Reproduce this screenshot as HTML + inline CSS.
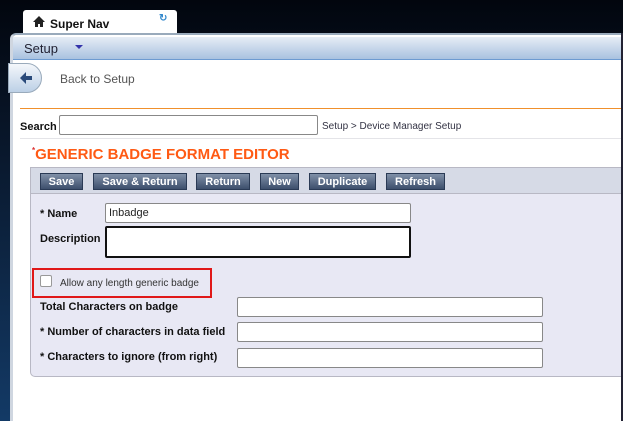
<!DOCTYPE html>
<html><head><style>
body{margin:0;width:623px;height:421px;overflow:hidden;background:linear-gradient(180deg,#02060e 0%,#0a1a30 40%,#133a66 100%);font-family:"Liberation Sans",sans-serif;position:relative}
div,span{position:absolute;box-sizing:border-box}
.tab{left:23px;top:10px;width:154px;height:28px;background:#fff;border-radius:3px 3px 0 0;font-size:12px;font-weight:bold;color:#111}
.win{left:10px;top:33px;width:613px;height:388px;background:#fff;border-radius:6px 0 0 0;border-top:2px solid #9ab;border-left:3px solid #cfd6e0}
.setup{left:13px;top:37px;width:610px;height:23px;background:linear-gradient(#e6edf6,#a9c2e0);border-bottom:1px solid #6d9bd1;font-size:13px;color:#223}
.btn{top:173px;height:17px;background:linear-gradient(#8090a8,#3d4f6c);color:#fff;font-size:11px;font-weight:bold;text-align:center;line-height:16px;border:1px solid #2a3a55}
.lbl{font-size:11px;font-weight:bold;color:#111}
.inp{background:#fff;border:1px solid #888;border-radius:2px}
</style></head><body>
<div class="tab"><svg style="position:absolute;left:10px;top:6px" width="12" height="11" viewBox="0 0 12 11"><path d="M6 0L0 6h2v5h3V8h2v3h3V6h2z" fill="#222"/></svg><span style="left:27px;top:7px">Super Nav</span><span style="left:136px;top:3px;color:#38c;font-size:10px">↻</span></div>
<div class="win"></div>
<div class="setup"><span style="left:11px;top:4px">Setup</span><span style="left:62px;top:8px;border:4px solid transparent;border-top:4px solid #33a"></span></div>
<div style="left:8px;top:63px;width:34px;height:30px;border-radius:0 16px 16px 0;background:linear-gradient(#f4f7fb,#bcd0e6);border:1px solid #9ab"><svg style="position:absolute;left:11px;top:8px" width="12" height="12"><path d="M0 6L6 0v4h6v4H6v4z" fill="#2a4a7a"/></svg></div>
<span style="left:60px;top:72px;font-size:12px;color:#555">Back to Setup</span>
<div style="left:20px;top:108px;width:603px;height:1px;background:#f0902c"></div>
<span class="lbl" style="left:20px;top:121px">Search</span>
<div class="inp" style="left:59px;top:115px;width:259px;height:20px"></div>
<span style="left:322px;top:121px;font-size:10px;color:#334">Setup &gt; Device Manager Setup</span>
<div style="left:20px;top:138px;width:603px;height:1px;background:#e4e4e8"></div>
<span style="left:32px;top:146px;color:#ff5a14;font-size:15px;font-weight:bold"><sup style="font-size:8px;color:#d33">*</sup>GENERIC BADGE FORMAT EDITOR</span>
<div style="left:30px;top:167px;width:593px;height:210px;background:#e8e8f4;border:1px solid #b8b8c4;border-right:none;border-radius:0 0 0 5px"></div>
<div style="left:31px;top:168px;width:592px;height:26px;background:#d6dae6;border-bottom:1px solid #b8b8c4"></div>
<div class="btn" style="left:40px;width:43px">Save</div>
<div class="btn" style="left:93px;width:94px">Save &amp; Return</div>
<div class="btn" style="left:196px;width:54px">Return</div>
<div class="btn" style="left:260px;width:39px">New</div>
<div class="btn" style="left:309px;width:67px">Duplicate</div>
<div class="btn" style="left:386px;width:59px">Refresh</div>
<span class="lbl" style="left:40px;top:208px">* Name</span>
<div class="inp" style="left:105px;top:203px;width:306px;height:20px"><span style="left:3px;top:3px;font-size:11px;color:#222">Inbadge</span></div>
<span class="lbl" style="left:40px;top:233px">Description</span>
<div class="inp" style="left:105px;top:226px;width:306px;height:32px;border:2px solid #111"></div>
<div style="left:32px;top:268px;width:180px;height:30px;border:2px solid #e01818"></div>
<div style="left:40px;top:275px;width:12px;height:12px;background:#fff;border:1px solid #999;border-radius:2px"></div>
<span style="left:60px;top:278px;font-size:10px;color:#333">Allow any length generic badge</span>
<span class="lbl" style="left:40px;top:301px">Total Characters on badge</span>
<span class="lbl" style="left:40px;top:326px">* Number of characters in data field</span>
<span class="lbl" style="left:40px;top:351px">* Characters to ignore (from right)</span>
<div class="inp" style="left:237px;top:297px;width:306px;height:20px"></div>
<div class="inp" style="left:237px;top:322px;width:306px;height:20px"></div>
<div class="inp" style="left:237px;top:348px;width:306px;height:20px"></div>
<div style="left:621px;top:33px;width:2px;height:388px;background:#223"></div>
</body></html>
